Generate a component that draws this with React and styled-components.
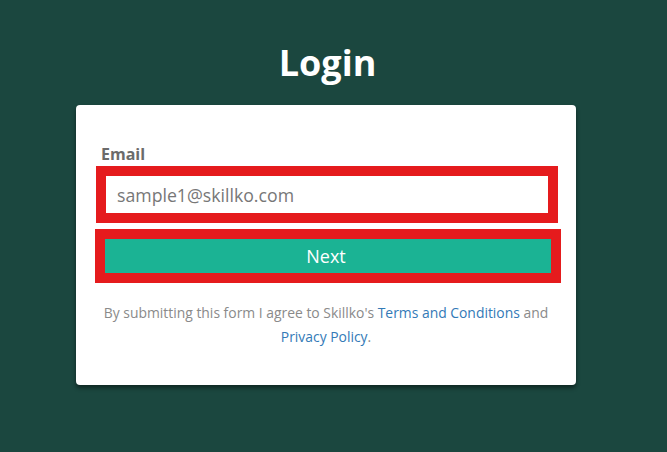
import React from "react";
import styled, { createGlobalStyle } from "styled-components";

const Global = createGlobalStyle`
  html, body { margin: 0; padding: 0; background: #1b473f; }
  body { font-family: "Open Sans", "Noto Sans", sans-serif; }
  * { box-sizing: border-box; }
`;

const Page = styled.div`
  min-height: 452px;
  background: #1b473f;
  display: flex;
  flex-direction: column;
  align-items: center;
  padding: 35px 15px 0 0;
`;

const Title = styled.h1`
  margin: 0 0 14px;
  font-size: 36px;
  line-height: 56px;
  font-weight: 700;
  color: #ffffff;
  margin-left: 3px;
`;

const Card = styled.div`
  width: 500px;
  background: #ffffff;
  border-radius: 4px;
  box-shadow: 0 3px 4px rgba(0, 0, 0, 0.45);
  padding: 39px 0 36px 20px;
`;

const Label = styled.label`
  display: block;
  margin-left: 5px;
  font-size: 16px;
  line-height: 20px;
  font-weight: 700;
  color: #6b6b6b;
  margin-bottom: 2px;
`;

const InputFrame = styled.div`
  width: 462px;
  border: 10px solid #e51b1d;
`;

const Input = styled.input`
  display: block;
  width: 100%;
  height: 37px;
  border: none;
  outline: none;
  padding: 0 11px;
  font-family: "Open Sans", "Noto Sans", sans-serif;
  font-size: 17.7px;
  color: #555;
  &::placeholder { color: #777; }
`;

const ButtonFrame = styled.div`
  width: 466px;
  margin-top: 6px;
  margin-left: -1px;
  border: 10px solid #e51b1d;
`;

const Button = styled.button`
  display: block;
  width: 100%;
  height: 34px;
  border: none;
  background: #1bb394;
  color: #ffffff;
  font-family: "Open Sans", "Noto Sans", sans-serif;
  font-size: 18px;
  font-weight: 500;
  padding: 0 4px 0 0;
  cursor: pointer;
`;

const Terms = styled.p`
  margin: 18px 0 0 -20px;
  width: 500px;
  padding: 0 20px;
  text-align: center;
  font-size: 13.9px;
  line-height: 24px;
  color: #8a8a8a;
`;

const Link = styled.a`
  color: #337ab7;
  text-decoration: none;
`;

export default function App() {
  return (
    <>
      <Global />
      <Page>
        <Title>Login</Title>
        <Card>
          <Label>Email</Label>
          <InputFrame>
            <Input placeholder="sample1@skillko.com" />
          </InputFrame>
          <ButtonFrame>
            <Button>Next</Button>
          </ButtonFrame>
          <Terms>
            By submitting this form I agree to Skillko's{" "}
            <Link href="#">Terms and Conditions</Link> and{" "}
            <Link href="#">Privacy Policy</Link>.
          </Terms>
        </Card>
      </Page>
    </>
  );
}
